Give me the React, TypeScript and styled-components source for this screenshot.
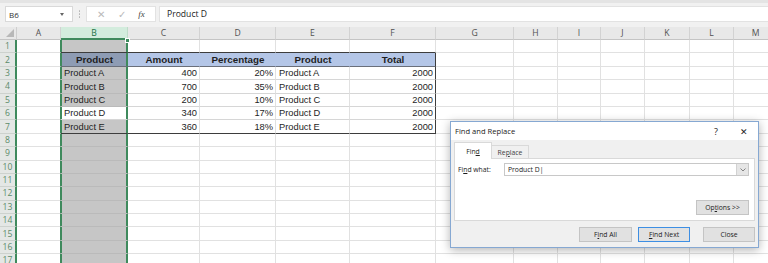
import React from 'react';
import styled, { createGlobalStyle } from 'styled-components';

const GREEN = '#3f8a5d';
const CELL_LINE = '#e1e1e1';
const DARK = '#3d3d3d';

const Global = createGlobalStyle`
  html, body { margin: 0; padding: 0; background: #fff; }
  body { font-family: "Liberation Sans", Arial, sans-serif; }
`;

const COLS = [44, 67, 72, 76, 74, 86, 78, 44, 43, 44, 45, 44, 44];
const LETTERS = ['A', 'B', 'C', 'D', 'E', 'F', 'G', 'H', 'I', 'J', 'K', 'L', 'M'];
const ROWS = Array.from({ length: 17 }, (_, i) => i + 1);

const DATA: Record<number, string[]> = {
  2: ['Product', 'Amount', 'Percentage', 'Product', 'Total'],
  3: ['Product A', '400', '20%', 'Product A', '2000'],
  4: ['Product B', '700', '35%', 'Product B', '2000'],
  5: ['Product C', '200', '10%', 'Product C', '2000'],
  6: ['Product D', '340', '17%', 'Product D', '2000'],
  7: ['Product E', '360', '18%', 'Product E', '2000'],
};

const Page = styled.div`
  position: relative;
  width: 768px;
  height: 263px;
  overflow: hidden;
  background: #fff;
`;

/* ---------- formula bar ---------- */
const Bar = styled.div`
  height: 27px;
  box-sizing: border-box;
  background: #f1f1f1;
  border-top: 3px solid #e4e4e4;
  padding: 3px 0 5px 5px;
  display: flex;
  align-items: stretch;
  font-family: "Open Sans", "Noto Sans", sans-serif;
`;

const NameBox = styled.div`
  width: 68px;
  box-sizing: border-box;
  background: #fff;
  border: 1px solid #d9d9d9;
  display: flex;
  align-items: center;
  justify-content: space-between;
  padding: 0 8px 0 3px;
  font-size: 8px;
  color: #333;
`;

const Caret = styled.span`
  width: 0;
  height: 0;
  border-left: 2.5px solid transparent;
  border-right: 2.5px solid transparent;
  border-top: 3px solid #666;
`;

const Dots = styled.div`
  width: 13px;
  display: flex;
  flex-direction: column;
  align-items: center;
  justify-content: center;
  gap: 1.5px;
  & > i {
    display: block;
    width: 1.5px;
    height: 1.5px;
    background: #b5b5b5;
    border-radius: 50%;
  }
`;

const FxGroup = styled.div`
  width: 70px;
  box-sizing: border-box;
  background: #fff;
  border: 1px solid #e2e2e2;
  display: flex;
  align-items: center;
  justify-content: space-around;
  padding: 0 4px;
  color: #b9b9b9;
  font-size: 10px;
  margin-right: 3px;
  margin-left: 0;
`;

const Fx = styled.span`
  font-family: "Liberation Serif", serif;
  font-style: italic;
  font-size: 9px;
  color: #444;
`;

const Formula = styled.div`
  flex: 1;
  background: #fff;
  border: 1px solid #e2e2e2;
  border-right: none;
  display: flex;
  align-items: center;
  padding-left: 7px;
  font-size: 8.6px;
  color: #222;
`;

/* ---------- sheet ---------- */
const Sheet = styled.div`
  display: grid;
  grid-template-columns: 17px ${COLS.map((c) => `${c}px`).join(' ')};
  grid-template-rows: 13px repeat(17, 13.4px);
  font-family: "Liberation Sans", Arial, sans-serif;
`;

const Corner = styled.div`
  background: #e8e8e8;
  border-right: 1px solid #cfcfcf;
  border-bottom: 1px solid #c4c4c4;
  box-sizing: border-box;
  display: flex;
  align-items: flex-end;
  justify-content: flex-end;
  padding: 0 2px 2px 0;
`;

const ColHead = styled.div<{ $sel?: boolean }>`
  box-sizing: border-box;
  background: ${(p) => (p.$sel ? '#d3ecdd' : '#e8e8e8')};
  color: ${(p) => (p.$sel ? '#217346' : '#505050')};
  border-right: 1px solid ${(p) => (p.$sel ? '#bfdcc9' : '#d2d2d2')};
  border-bottom: ${(p) => (p.$sel ? `2px solid ${GREEN}` : '1px solid #c4c4c4')};
  display: flex;
  align-items: center;
  justify-content: center;
  font-size: 8.6px;
  font-family: "Open Sans", "Noto Sans", sans-serif;
`;

const RowHead = styled.div`
  box-sizing: border-box;
  background: #e4e7e5;
  color: #5b8a69;
  border-bottom: 1px solid #cdd2ce;
  border-right: 2px solid ${GREEN};
  display: flex;
  align-items: center;
  justify-content: center;
  font-size: 8.6px;
  font-family: "Open Sans", "Noto Sans", sans-serif;
`;

type Align = 'left' | 'right' | 'center';

const Cell = styled.div<{
  $bg: string;
  $bb: string;
  $br: string;
  $align: Align;
  $bold?: boolean;
  $shadow?: string;
}>`
  position: relative;
  box-sizing: border-box;
  background: ${(p) => p.$bg};
  border-right: 1px solid ${(p) => p.$br};
  border-bottom: 1px solid ${(p) => p.$bb};
  box-shadow: ${(p) => p.$shadow ?? 'none'};
  display: flex;
  align-items: flex-end;
  justify-content: ${(p) => (p.$align === 'left' ? 'flex-start' : p.$align === 'right' ? 'flex-end' : 'center')};
  padding: 0 2px 0 3px;
  font-size: ${(p) => (p.$bold ? '9.8px' : '9.3px')};
  font-weight: ${(p) => (p.$bold ? 700 : 400)};
  line-height: 12px;
  color: #1e1e1e;
  white-space: nowrap;
`;

const Handle = styled.span`
  position: absolute;
  right: -3px;
  top: -2px;
  width: 3px;
  height: 3px;
  background: ${GREEN};
  border: 1px solid #fff;
  z-index: 2;
`;

function cellProps(r: number, c: number) {
  const inTable = r >= 2 && r <= 7 && c >= 1 && c <= 5;
  const selB = c === 1;
  let bg = '#fff';
  let bb = CELL_LINE;
  let br = CELL_LINE;
  let shadow: string | undefined;
  let align: Align = 'left';
  let bold = false;
  let text = '';

  if (inTable) {
    text = DATA[r][c - 1];
    if (r === 2) {
      bg = selB ? '#8e9cb4' : '#b4c6e7';
      br = bg;
      bold = true;
      align = 'center';
      bb = '#6a6f7a';
    } else {
      align = c === 1 || c === 4 ? 'left' : 'right';
      bb = '#d6d6d6';
      if (r === 7) bb = DARK;
    }
  }
  if (selB && r !== 2 && r !== 6) {
    bg = '#c6c6c6';
    if (!(r === 7)) bb = '#bababa';
  }
  if (r === 1 && c >= 1 && c <= 5) bb = DARK;
  if (c === 5 && r >= 2 && r <= 7) br = DARK;
  if (c === 0 || c === 1) br = GREEN;
  if (selB) {
    shadow = `inset 1px 0 0 ${GREEN}, inset -1px 0 0 ${GREEN}`;
  }
  return { bg, bb, br, shadow, align, bold, text };
}

/* ---------- dialog ---------- */
const Dialog = styled.div`
  position: absolute;
  left: 450px;
  top: 121px;
  width: 309px;
  height: 127px;
  box-sizing: border-box;
  border: 1px solid #86a8d2;
  background: #f0f0f0;
  box-shadow: 0 2px 9px rgba(0, 0, 0, 0.3);
  display: flex;
  flex-direction: column;
  font-family: "Open Sans", "Noto Sans", sans-serif;
  color: #1a1a1a;
`;

const TitleBar = styled.div`
  height: 18px;
  flex: none;
  background: #fff;
  display: flex;
  align-items: center;
  padding-left: 4px;
  font-size: 7.6px;
`;

const Title = styled.span`
  flex: 1;
`;

const TitleBtn = styled.span<{ $w?: number }>`
  width: 28px;
  text-align: center;
  font-size: 9px;
  color: #222;
`;

const Body = styled.div`
  flex: 1;
  display: flex;
  flex-direction: column;
  padding: 3px 3px 4px 3px;
`;

const Tabs = styled.div`
  height: 16px;
  display: flex;
  align-items: flex-end;
  position: relative;
  z-index: 1;
  margin-bottom: -1px;
`;

const Tab = styled.div<{ $active?: boolean }>`
  box-sizing: border-box;
  width: ${(p) => (p.$active ? 38 : 37)}px;
  height: ${(p) => (p.$active ? 17 : 14)}px;
  background: ${(p) => (p.$active ? '#fff' : '#f0f0f0')};
  border: 1px solid #d9d9d9;
  border-bottom: ${(p) => (p.$active ? 'none' : '1px solid #d9d9d9')};
  border-left: ${(p) => (p.$active ? '1px solid #d9d9d9' : 'none')};
  display: flex;
  align-items: center;
  justify-content: center;
  font-size: 6.8px;
  color: ${(p) => (p.$active ? '#222' : '#444')};
`;

const Panel = styled.div`
  height: 63px;
  box-sizing: border-box;
  background: #fff;
  border: 1px solid #d9d9d9;
  display: flex;
  flex-direction: column;
  padding: 4px 5px 5px 3px;
`;

const FieldRow = styled.div`
  display: flex;
  align-items: center;
  height: 13px;
`;

const Label = styled.span`
  width: 46px;
  font-size: 6.8px;
`;

const Input = styled.div`
  flex: 1;
  height: 13px;
  box-sizing: border-box;
  border: 1px solid #c8c8c8;
  display: flex;
  align-items: center;
  font-size: 6.8px;
  padding-left: 3px;
`;

const InputText = styled.span`
  flex: 1;
`;

const DropBtn = styled.span`
  width: 11px;
  height: 11px;
  background: #e6e6e6;
  border-left: 1px solid #d2d2d2;
  display: flex;
  align-items: center;
  justify-content: center;
`;

const Btn = styled.div<{ $w: number; $primary?: boolean; $ml?: number }>`
  box-sizing: border-box;
  width: ${(p) => p.$w}px;
  height: 15px;
  margin-left: ${(p) => p.$ml ?? 0}px;
  background: #e1e1e1;
  border: 1px solid ${(p) => (p.$primary ? '#3d8ee3' : '#c4c4c4')};
  display: flex;
  align-items: center;
  justify-content: center;
  font-size: 6.8px;
  color: #222;
`;

const OptionsRow = styled.div`
  margin-top: auto;
  display: flex;
  justify-content: flex-end;
`;

const ButtonRow = styled.div`
  margin-top: 6px;
  display: flex;
  justify-content: flex-end;
`;

export default function App() {
  return (
    <Page>
      <Global />
      <Bar>
        <NameBox>
          <span>B6</span>
          <Caret />
        </NameBox>
        <Dots>
          <i />
          <i />
          <i />
        </Dots>
        <FxGroup>
          <span>✕</span>
          <span>✓</span>
          <Fx>fx</Fx>
        </FxGroup>
        <Formula>Product D</Formula>
      </Bar>
      <Sheet>
        <Corner>
          <svg width="8" height="8" viewBox="0 0 8 8">
            <polygon points="8,0 8,8 0,8" fill="#b8b8b8" />
          </svg>
        </Corner>
        {LETTERS.map((l, i) => (
          <ColHead key={l} $sel={i === 1}>
            {l}
          </ColHead>
        ))}
        {ROWS.map((r) => (
          <React.Fragment key={r}>
            <RowHead>{r}</RowHead>
            {LETTERS.map((l, c) => {
              const p = cellProps(r, c);
              return (
                <Cell
                  key={l + r}
                  $bg={p.bg}
                  $bb={p.bb}
                  $br={p.br}
                  $shadow={p.shadow}
                  $align={p.align}
                  $bold={p.bold}
                >
                  {p.text}
                  {r === 1 && c === 1 && <Handle />}
                </Cell>
              );
            })}
          </React.Fragment>
        ))}
      </Sheet>
      <Dialog>
        <TitleBar>
          <Title>Find and Replace</Title>
          <TitleBtn>?</TitleBtn>
          <TitleBtn>✕</TitleBtn>
        </TitleBar>
        <Body>
          <Tabs>
            <Tab $active>
              Fin<u>d</u>
            </Tab>
            <Tab>
              Re<u>p</u>lace
            </Tab>
          </Tabs>
          <Panel>
            <FieldRow>
              <Label>
                Fi<u>n</u>d what:
              </Label>
              <Input>
                <InputText>Product D|</InputText>
                <DropBtn>
                  <svg width="6" height="4" viewBox="0 0 6 4">
                    <polyline points="0.5,0.5 3,3 5.5,0.5" fill="none" stroke="#777" strokeWidth="0.9" />
                  </svg>
                </DropBtn>
              </Input>
            </FieldRow>
            <OptionsRow>
              <Btn $w={53}>
                Op<u>t</u>ions &gt;&gt;
              </Btn>
            </OptionsRow>
          </Panel>
          <ButtonRow>
            <Btn $w={53}>
              F<u>i</u>nd All
            </Btn>
            <Btn $w={52} $ml={6} $primary>
              <u>F</u>ind Next
            </Btn>
            <Btn $w={52} $ml={13}>
              Close
            </Btn>
          </ButtonRow>
        </Body>
      </Dialog>
    </Page>
  );
}
